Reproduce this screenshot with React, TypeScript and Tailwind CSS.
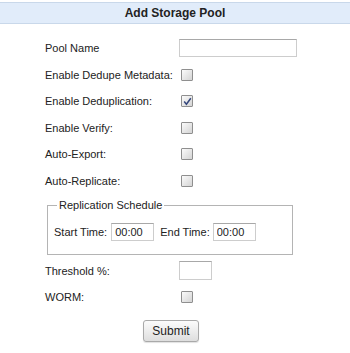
import React from "react";

function Box({ checked = false }: { checked?: boolean }) {
  return (
    <span className="ml-[2px] w-[12px] h-[12px] border border-[#8f8f8f] rounded-[1px] bg-linear-to-br from-[#fbfbfb] to-[#d4d4d4] flex items-center justify-center">
      {checked && (
        <svg width="9" height="9" viewBox="0 0 9 9">
          <path d="M1.2 4.6 L3.4 7.2 L7.8 1.2" fill="none" stroke="#34467c" strokeWidth="1.5" />
        </svg>
      )}
    </span>
  );
}

function Row({ label, children }: { label: string; children?: React.ReactNode }) {
  return (
    <div className="h-[26.5px] flex items-center">
      <div className="w-[134px] whitespace-nowrap">{label}</div>
      <div className="flex items-center">{children}</div>
    </div>
  );
}

const inputCls =
  "h-[18px] border border-[#cdcdcd] border-t-[#a8a8a8] bg-white px-[3px] text-[11px] text-[#222] outline-none";

export default function App() {
  return (
    <div className="w-[350px] h-[353px] bg-white pt-[2px] font-['Liberation_Sans',Arial,sans-serif] text-[11px] text-[#222] leading-[14px]">
      <div className="h-[22px] bg-[#e1ecfa] border-y border-[#c9d8ea] flex items-center justify-center font-bold text-[12px]">
        Add Storage Pool
      </div>
      <div className="pl-[45px] pt-[10.75px]">
        <Row label="Pool Name">
          <input className={inputCls + " w-[118px] h-[18px]"} defaultValue="" />
        </Row>
        <Row label="Enable Dedupe Metadata:">
          <Box />
        </Row>
        <Row label="Enable Deduplication:">
          <Box checked />
        </Row>
        <Row label="Enable Verify:">
          <Box />
        </Row>
        <Row label="Auto-Export:">
          <Box />
        </Row>
        <Row label="Auto-Replicate:">
          <Box />
        </Row>
        <fieldset className="mt-[4.25px] ml-[2px] w-[246px] border border-[#b4b4b4]">
          <legend className="ml-[9px] px-[2px] leading-[14px]">Replication Schedule</legend>
          <div className="pl-[6px] pt-[11px] pb-[13px] flex items-center">
            <span>Start Time:</span>
            <input className={inputCls + " ml-[4px] w-[43px]"} defaultValue="00:00" />
            <span className="ml-[6px]">End Time:</span>
            <input className={inputCls + " ml-[3px] w-[43px]"} defaultValue="00:00" />
          </div>
        </fieldset>
        <div className="mt-[2.5px]">
          <Row label="Threshold %:">
            <input className={inputCls + " w-[33px] h-[19px]"} defaultValue="" />
          </Row>
          <Row label="WORM:">
            <Box />
          </Row>
        </div>
        <div className="mt-[9px] ml-[98px]">
          <button className="w-[56px] h-[22px] rounded-[3px] border border-[#a9a9a9] bg-linear-to-b from-[#fcfcfc] to-[#dedede] text-[12px] text-[#222] shadow-[0_1px_1px_rgba(0,0,0,0.12)]">
            Submit
          </button>
        </div>
      </div>
    </div>
  );
}
